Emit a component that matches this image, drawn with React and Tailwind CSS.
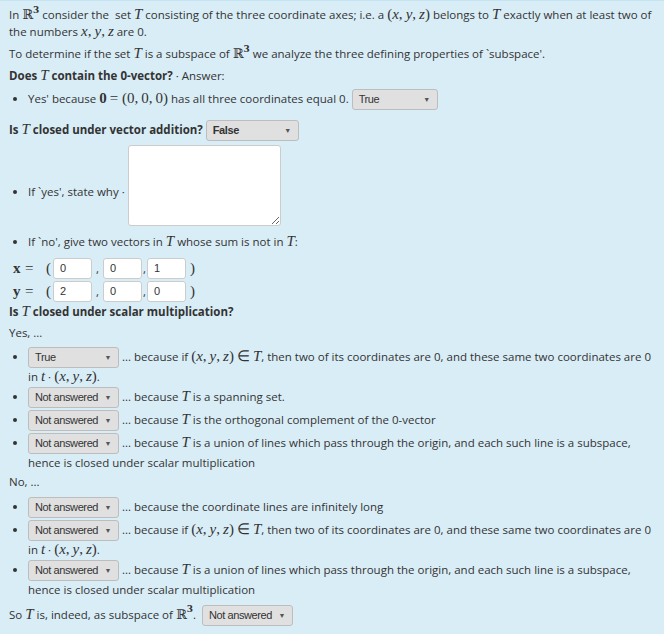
import React from "react";

const M = ({ children, className = "" }) => (
  <span className={`font-['Liberation_Serif',serif] italic text-[15px] ${className}`}>{children}</span>
);

const R3 = () => (
  <span className="font-['DejaVu_Serif',serif] text-[13px]">
    ℝ<sup className="text-[9px] font-bold -top-[0.7em]">3</sup>
  </span>
);

const Sel = ({ value, w = "w-[91px]" }) => (
  <span
    className={`inline-flex ${w} h-[21px] items-center justify-between whitespace-nowrap align-middle rounded-[3px] border border-[#bdbdbd] bg-[#e0e0e0] pl-[6px] pr-[7px] font-['Liberation_Sans',sans-serif] text-[11px] leading-none tracking-[-0.4px] text-[#333]`}
  >
    <span>{value}</span>
    <span className="text-[7px] text-[#555]">▼</span>
  </span>
);

const Box = ({ value }) => (
  <span className="inline-flex w-[39px] h-[21px] items-center align-middle rounded-[3px] border border-[#ccc] bg-white px-[6px] font-['Liberation_Sans',sans-serif] text-[11px] text-[#333]">
    {value}
  </span>
);

const Txyz = () => (
  <>
    <M className="not-italic">(</M>
    <M>x</M>
    <M className="not-italic">,&thinsp;</M>
    <M>y</M>
    <M className="not-italic">,&thinsp;</M>
    <M>z</M>
    <M className="not-italic">)</M>
  </>
);

export default function App() {
  return (
    <div className="min-h-[634px] bg-[#d9edf7] border-t border-[#c4e3f3] px-[9px] pt-[5px] font-['Open_Sans',sans-serif] text-[11.5px] leading-[17px] text-[#333]">
      <p>
        In <R3 /> consider the&nbsp; set <M>T</M> consisting of the three coordinate axes; i.e. a{" "}
        <Txyz /> belongs to <M>T</M> exactly when at least two of the numbers <M>x</M>
        <M className="not-italic">,&thinsp;</M>
        <M>y</M>
        <M className="not-italic">,&thinsp;</M>
        <M>z</M> are 0.
      </p>
      <p className="mt-[5px]">
        To determine if the set <M>T</M> is a subspace of <R3 /> we analyze the three defining properties of `subspace'.
      </p>
      <p className="mt-[5px] font-bold">
        Does <M className="font-normal">T</M> contain the 0-vector? <span className="font-normal">· Answer:</span>
      </p>
      <ul className="mt-[5px] list-disc pl-[19px]">
        <li>
          Yes' because <M className="not-italic font-bold">0</M> <M className="not-italic">= (0,&thinsp;0,&thinsp;0)</M> has all
          three coordinates equal 0. <Sel value="True" w="w-[86px]" />
        </li>
      </ul>
      <p className="mt-[10px] font-bold">
        Is <M className="font-normal">T</M> closed under vector addition? <Sel value="False" w="w-[93px]" />
      </p>
      <ul className="mt-[4px] list-disc pl-[19px]">
        <li>
          If `yes', state why ·{" "}
          <textarea className="inline-block h-[81px] w-[153px] resize align-[-30px] rounded-[3px] border border-[#ccc] bg-white" />
        </li>
        <li className="mt-[7px]">
          If `no', give two vectors in <M>T</M> whose sum is not in <M>T</M>:
        </li>
      </ul>
      <div className="mt-[7px] flex items-center h-[23px]">
        <M className="not-italic font-bold w-[16px] pl-[4px]">x</M>
        <M className="not-italic w-[21px]">=</M>
        <M className="not-italic w-[7px]">(</M>
        <Box value="0" />
        <span className="mx-[4px]">,</span>
        <Box value="0" />
        <span className="mx-[1px]">,</span>
        <Box value="1" />
        <M className="not-italic ml-[4px]">)</M>
      </div>
      <div className="flex items-center h-[23px]">
        <M className="not-italic font-bold w-[16px] pl-[4px]">y</M>
        <M className="not-italic w-[21px]">=</M>
        <M className="not-italic w-[7px]">(</M>
        <Box value="2" />
        <span className="mx-[4px]">,</span>
        <Box value="0" />
        <span className="mx-[1px]">,</span>
        <Box value="0" />
        <M className="not-italic ml-[4px]">)</M>
      </div>
      <p className="font-bold">
        Is <M className="font-normal">T</M> closed under scalar multiplication?
      </p>
      <p className="mt-[4px]">Yes, ...</p>
      <ul className="mt-[6px] list-disc pl-[19px]">
        <li>
          <Sel value="True" /> ... because if <Txyz /> <M className="not-italic">∈</M> <M>T</M>, then two of its
          coordinates are 0, and these same two coordinates are 0 in <M>t</M> · <Txyz />.
        </li>
        <li className="mt-[2px]">
          <Sel value="Not answered" /> ... because <M>T</M> is a spanning set.
        </li>
        <li className="mt-[2px]">
          <Sel value="Not answered" /> ... because <M>T</M> is the orthogonal complement of the 0-vector
        </li>
        <li className="mt-[2px]">
          <Sel value="Not answered" /> ... because <M>T</M> is a union of lines which pass through the origin, and
          each such line is a subspace, hence is closed under scalar multiplication
        </li>
      </ul>
      <p className="mt-[2px]">No, ...</p>
      <ul className="mt-[7px] list-disc pl-[19px]">
        <li>
          <Sel value="Not answered" /> ... because the coordinate lines are infinitely long
        </li>
        <li className="mt-[2px]">
          <Sel value="Not answered" /> ... because if <Txyz /> <M className="not-italic">∈</M> <M>T</M>, then two
          of its coordinates are 0, and these same two coordinates are 0 in <M>t</M> · <Txyz />.
        </li>
        <li className="mt-[2px]">
          <Sel value="Not answered" /> ... because <M>T</M> is a union of lines which pass through the origin, and
          each such line is a subspace, hence is closed under scalar multiplication
        </li>
      </ul>
      <p className="mt-[7px]">
        So <M>T</M> is, indeed, as subspace of <R3 />.&nbsp; <Sel value="Not answered" />
      </p>
    </div>
  );
}
